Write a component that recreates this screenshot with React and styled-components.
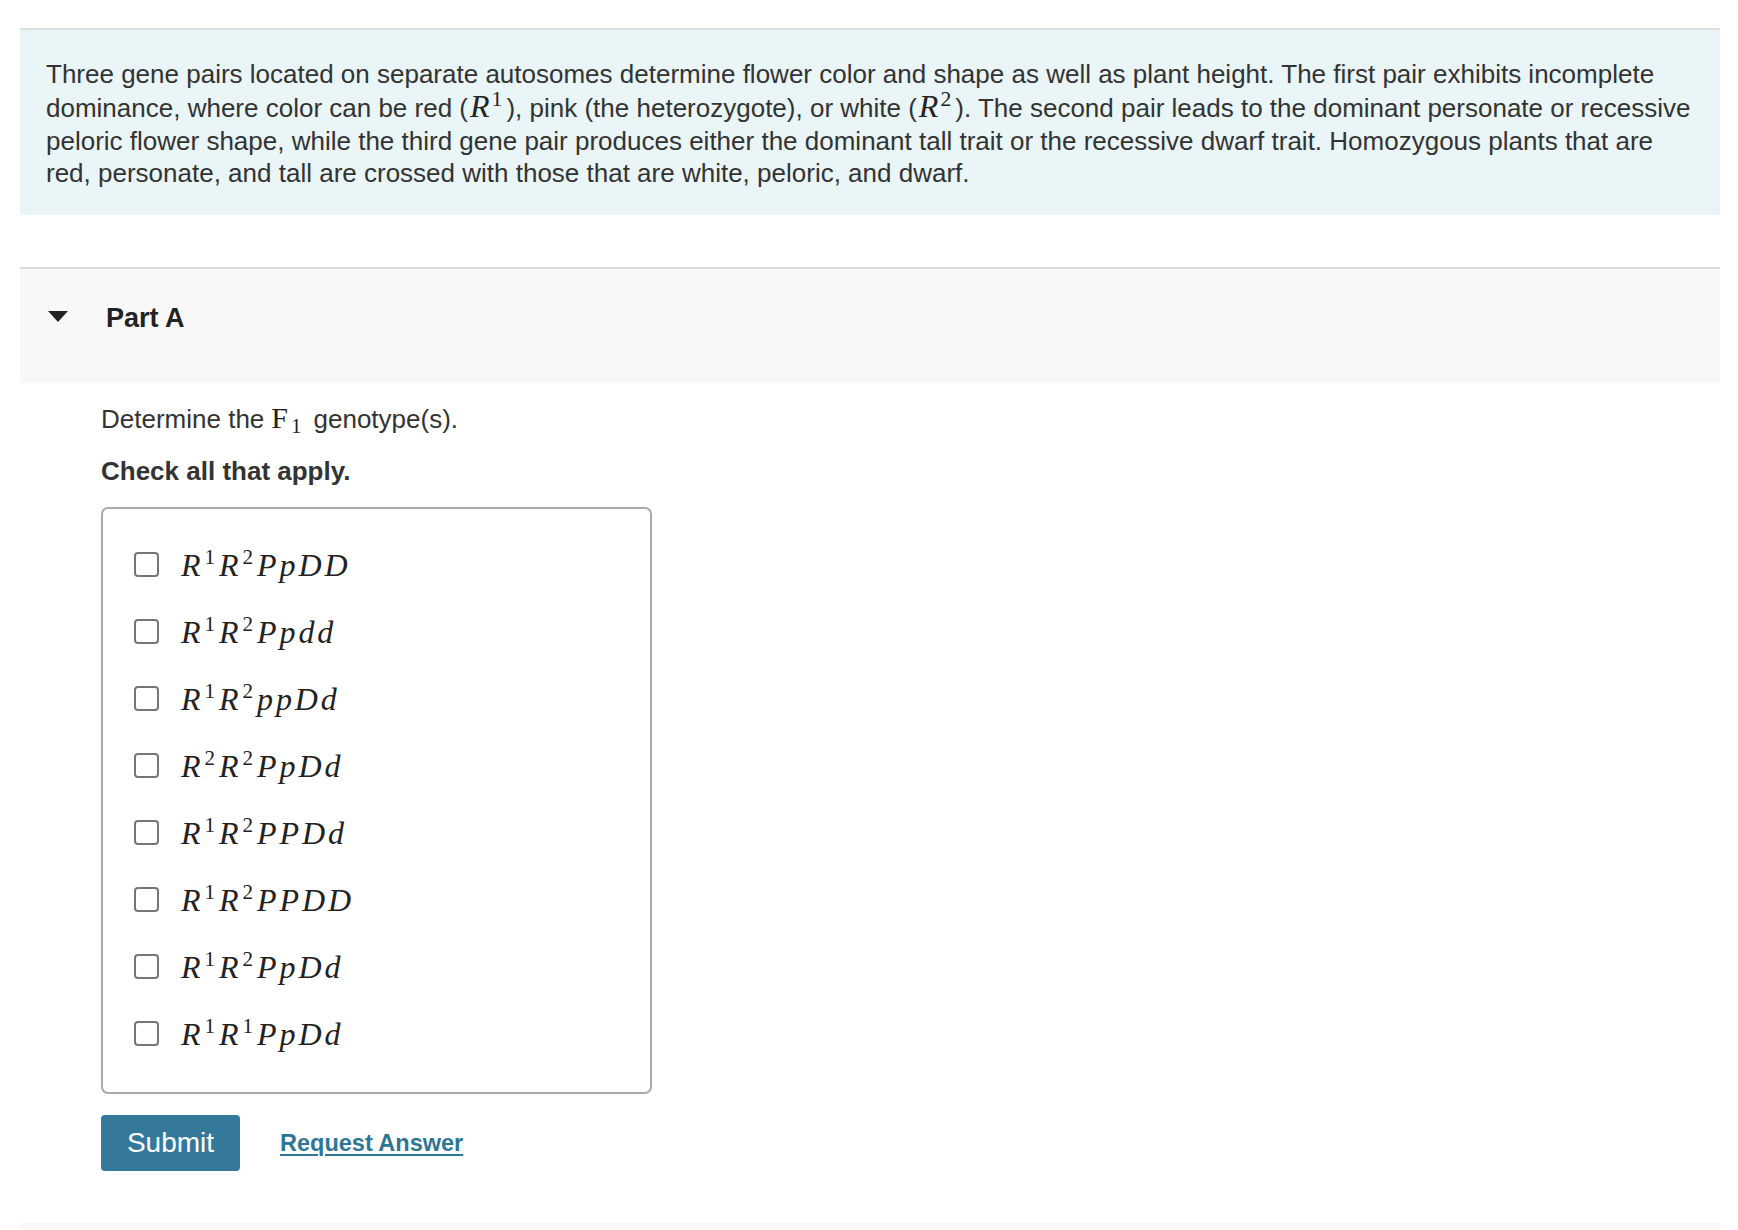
import React from "react";
import styled, { createGlobalStyle } from "styled-components";

const GlobalStyle = createGlobalStyle`
  html, body { margin: 0; padding: 0; background: #ffffff; }
  body {
    font-family: "Liberation Sans", Arial, Helvetica, sans-serif;
    color: #333333;
    -webkit-font-smoothing: antialiased;
  }
`;

const Page = styled.div`
  padding: 28px 18px 0 20px;
`;

const IntroPanel = styled.div`
  border-top: 2px solid #dddddd;
  background: #e9f5f7;
  padding: 28px 20px 26px 26px;
  font-size: 26px;
  line-height: 32.3px;
`;

const InlineMath = styled.span`
  display: inline-block;
  font-family: "Liberation Serif", "Times New Roman", serif;
  font-size: ${(p) => p.$size || "32px"};
  font-style: ${(p) => (p.$upright ? "normal" : "italic")};
  line-height: 32px;
  margin: ${(p) => p.$margin || "0 2px"};
  letter-spacing: ${(p) => p.$spacing || "0"};
  color: #222222;
`;

const Sup = styled.span`
  font-style: normal;
  font-size: 0.68em;
  vertical-align: 0.52em;
  line-height: 0;
  margin-left: 2px;
  margin-right: 2px;
`;

const Sub = styled.span`
  font-style: normal;
  font-size: 0.7em;
  vertical-align: -0.25em;
  line-height: 0;
  margin-left: 2px;
`;

const PartHeader = styled.div`
  margin-top: 52px;
  border-top: 2px solid #dddddd;
  background: #f8f8f8;
  height: 116px;
  box-sizing: border-box;
  padding: 0 0 17px 28px;
  display: flex;
  align-items: center;
  gap: 38px;
`;

const Caret = styled.svg`
  width: 20px;
  height: 11px;
  flex: none;
  margin-bottom: 3px;
`;

const PartTitle = styled.h2`
  margin: 0;
  font-size: 27px;
  font-weight: 700;
  color: #222222;
  line-height: 32px;
`;

const PartBody = styled.div`
  padding: 19px 0 0 81px;
`;

const Prompt = styled.p`
  margin: 0;
  font-size: 26px;
  line-height: 32.5px;
`;

const Instruction = styled.p`
  margin: 19px 0 0;
  font-size: 26px;
  line-height: 32.5px;
  font-weight: 700;
`;

const OptionsBox = styled.div`
  margin-top: 20px;
  width: 551px;
  box-sizing: border-box;
  border: 2px solid #aaaaaa;
  border-radius: 7px;
  padding: 22px 0 25px 31px;
  display: flex;
  flex-direction: column;
`;

const OptionRow = styled.label`
  height: 67px;
  display: flex;
  align-items: center;
  gap: 22px;
  cursor: pointer;
`;

const Box = styled.span`
  width: 25px;
  height: 25px;
  box-sizing: border-box;
  border: 2px solid #767676;
  border-radius: 4px;
  background: #ffffff;
  flex: none;
`;

const Genotype = styled.span`
  font-family: "Liberation Serif", "Times New Roman", serif;
  font-style: italic;
  font-size: 32px;
  line-height: 40px;
  color: #222222;
  letter-spacing: 2.9px;
  white-space: nowrap;
`;

const GenoSup = styled.span`
  font-style: normal;
  font-size: 0.66em;
  vertical-align: 0.55em;
  line-height: 0;
  letter-spacing: 0;
  margin: 0 4px 0 1px;
`;

const Actions = styled.div`
  margin-top: 21px;
  display: flex;
  align-items: center;
  gap: 40px;
`;

const SubmitButton = styled.button`
  width: 139px;
  height: 56px;
  border: none;
  border-radius: 4px;
  background: #35799a;
  color: #ffffff;
  font-family: "Liberation Sans", Arial, sans-serif;
  font-size: 28px;
  padding: 0;
  cursor: pointer;
`;

const RequestLink = styled.a`
  font-size: 23.5px;
  font-weight: 700;
  color: #2f7597;
  text-decoration: underline;
  text-underline-offset: 3px;
  text-decoration-thickness: 2px;
  cursor: pointer;
`;

const NextPart = styled.div`
  margin-top: 52px;
  height: 20px;
  background: #f8f8f8;
`;

const options = [
  ["1", "2", "PpDD"],
  ["1", "2", "Ppdd"],
  ["1", "2", "ppDd"],
  ["2", "2", "PpDd"],
  ["1", "2", "PPDd"],
  ["1", "2", "PPDD"],
  ["1", "2", "PpDd"],
  ["1", "1", "PpDd"],
];

function GenotypeText({ a, b, rest }) {
  return (
    <Genotype>
      R<GenoSup>{a}</GenoSup>R<GenoSup>{b}</GenoSup>
      {rest}
    </Genotype>
  );
}

export default function App() {
  return (
    <>
      <GlobalStyle />
      <Page>
        <IntroPanel>
          Three gene pairs located on separate autosomes determine flower color and shape as well as
          plant height. The first pair exhibits incomplete dominance, where color can be red (
          <InlineMath>
            R<Sup>1</Sup>
          </InlineMath>
          ), pink (the heterozygote), or white (
          <InlineMath>
            R<Sup>2</Sup>
          </InlineMath>
          ). The second pair leads to the dominant personate or recessive peloric flower shape, while
          the third gene pair produces either the dominant tall trait or the recessive dwarf trait.
          Homozygous plants that are red, personate, and tall are crossed with those that are white,
          peloric, and dwarf.
        </IntroPanel>

        <PartHeader>
          <Caret viewBox="0 0 20 11">
            <path d="M0 0 H20 L10 11 Z" fill="#222222" />
          </Caret>
          <PartTitle>Part A</PartTitle>
        </PartHeader>

        <PartBody>
          <Prompt>
            Determine the
            <InlineMath $upright $size="30px" $margin="0 11px 0 7px" $spacing="1px">
              F<Sub>1</Sub>
            </InlineMath>
            genotype(s).
          </Prompt>
          <Instruction>Check all that apply.</Instruction>

          <OptionsBox>
            {options.map(([a, b, rest], i) => (
              <OptionRow key={i}>
                <Box />
                <GenotypeText a={a} b={b} rest={rest} />
              </OptionRow>
            ))}
          </OptionsBox>

          <Actions>
            <SubmitButton>Submit</SubmitButton>
            <RequestLink>Request Answer</RequestLink>
          </Actions>
        </PartBody>

        <NextPart />
      </Page>
    </>
  );
}
